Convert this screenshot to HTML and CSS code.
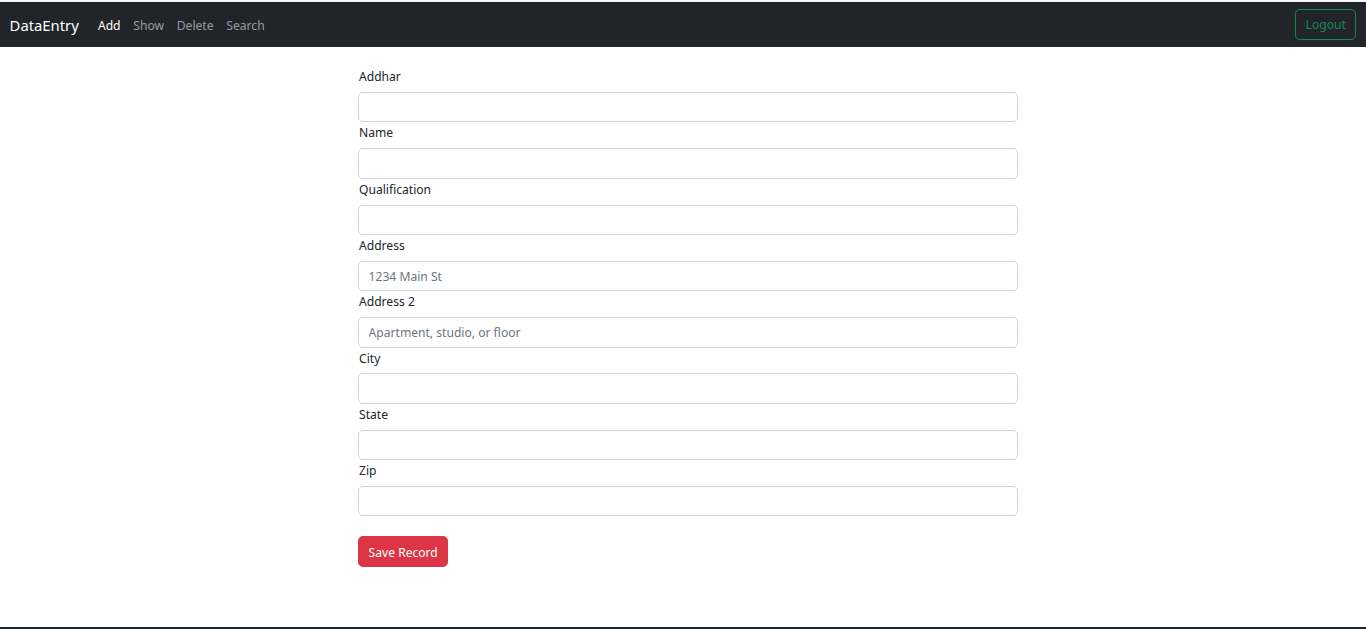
FILE: index.html
```html
<!DOCTYPE html>
<html lang="en">
<head>
<meta charset="utf-8">
<title>DataEntry</title>
<link rel="stylesheet" href="styles.css">
</head>
<body>
<div class="page">
  <nav class="navbar">
    <a class="brand" href="#">DataEntry</a>
    <ul class="nav">
      <li><a class="nav-link active" href="#">Add</a></li>
      <li><a class="nav-link" href="#">Show</a></li>
      <li><a class="nav-link" href="#">Delete</a></li>
      <li><a class="nav-link" href="#">Search</a></li>
    </ul>
    <button class="btn-logout" type="button">Logout</button>
  </nav>
  <main class="main">
    <form class="form">
      <div class="field"><label class="label">Addhar</label><input class="input" type="text"></div>
      <div class="field"><label class="label">Name</label><input class="input" type="text"></div>
      <div class="field"><label class="label">Qualification</label><input class="input" type="text"></div>
      <div class="field"><label class="label">Address</label><input class="input" type="text" placeholder="1234 Main St"></div>
      <div class="field"><label class="label">Address 2</label><input class="input" type="text" placeholder="Apartment, studio, or floor"></div>
      <div class="field"><label class="label">City</label><input class="input" type="text"></div>
      <div class="field"><label class="label">State</label><input class="input" type="text"></div>
      <div class="field"><label class="label">Zip</label><input class="input" type="text"></div>
      <button class="btn-save" type="button">Save Record</button>
    </form>
  </main>
  <footer class="footer"></footer>
</div>
</body>
</html>
```
FILE: styles.css
```css
* { box-sizing: border-box; }
html, body { margin: 0; padding: 0; }
body {
  font-family: "Noto Sans", "Open Sans", sans-serif;
  font-size: 12.1px;
  color: #212529;
  background: #fff;
}
.page {
  height: 629px;
  display: flex;
  flex-direction: column;
  border-top: 2px solid #f4f5f6;
}
.navbar {
  height: 45px;
  flex: 0 0 45px;
  background: #212529;
  display: flex;
  align-items: center;
  padding: 0 9.6px;
}
.brand {
  color: #fff;
  text-decoration: none;
  font-size: 14.8px;
  line-height: 24px;
  margin-right: 12.8px;
}
.nav {
  list-style: none;
  margin: 0;
  padding: 0;
  display: flex;
  flex: 1;
}
.nav-link {
  display: block;
  padding: 8px 6.4px 5px;
  color: rgba(255,255,255,0.55);
  text-decoration: none;
  font-size: 12.1px;
  line-height: 19.2px;
}
.nav-link.active { color: #fff; }
.btn-logout {
  font-family: inherit;
  font-size: 12.1px;
  line-height: 19.2px;
  padding: 5px 9.6px 4px;
  height: 31px;
  color: #198754;
  background: transparent;
  border: 1px solid #198754;
  border-radius: 4.8px;
}
.main {
  flex: 1;
  padding-top: 19.1px;
}
.form {
  width: 660px;
  margin-left: 358px;
  display: flex;
  flex-direction: column;
}
.field { display: flex; flex-direction: column; }
.label {
  display: block;
  line-height: 19.5px;
  padding-top: 1px;
  margin-bottom: 5.4px;
  padding-left: 1px;
}
.input {
  height: 30.4px;
  width: 100%;
  padding: 4.8px 9.6px 4px;
  font-family: inherit;
  font-size: 12.1px;
  color: #212529;
  border: 1px solid #ced4da;
  border-radius: 4.8px;
  background: #fff;
}
.input::placeholder { color: #6c757d; }
.btn-save {
  align-self: flex-start;
  margin-top: 19.2px;
  height: 31px;
  padding: 6px 9.6px 4px;
  font-family: inherit;
  font-size: 12.1px;
  line-height: 19.2px;
  color: #fff;
  background: #dc3545;
  border: 1px solid #dc3545;
  border-radius: 4.8px;
}
.footer {
  height: 2px;
  flex: 0 0 2px;
  background: #212529;
}
```
